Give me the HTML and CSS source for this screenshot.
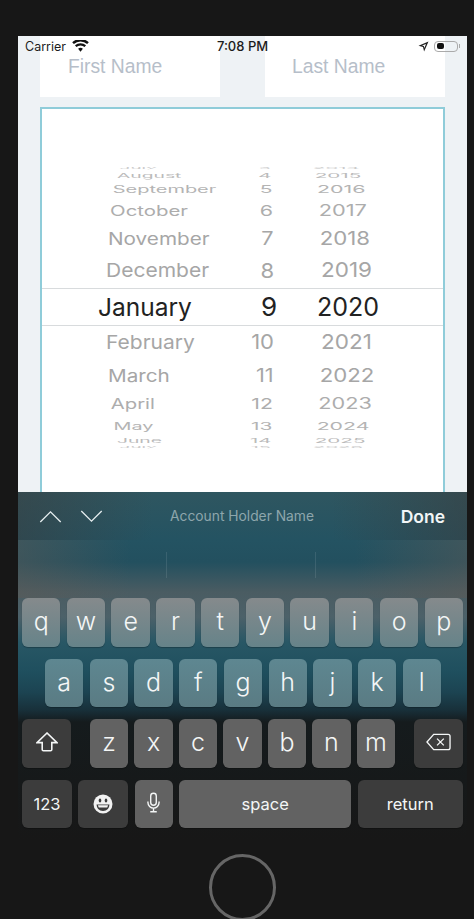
FILE: index.html
```html
<!DOCTYPE html>
<html lang="en">
<head>
  <meta charset="UTF-8">
  <title>Date picker</title>
  <link rel="stylesheet" href="styles.css">
</head>
<body>
<div class="screen">
  <div class="status">
    <div class="status-left">
      <span>Carrier</span>
      <svg class="wifi" viewBox="0 0 18 13"><path d="M9 12.6 6.4 9.6a3.8 3.8 0 0 1 5.2 0zM4.6 7.6 3 5.8a9 9 0 0 1 12 0l-1.6 1.8a6.6 6.6 0 0 0-8.8 0zM1.8 4.4 0 2.4a13.4 13.4 0 0 1 18 0l-1.8 2a10.8 10.8 0 0 0-14.4 0z"/></svg>
    </div>
    <div class="status-time">7:08 PM</div>
    <div class="status-right">
      <svg class="arrow" viewBox="0 0 11 11"><path d="M10.500.5 .5 4.700l4.500 1.300 1.100 4.500zM8 3 4 4.600l1.900.5.500 1.900z" fill-rule="evenodd"/></svg>
      <div class="battery"><div class="battery-level"></div></div>
      <div class="battery-tip"></div>
    </div>
  </div>

  <div class="names">
    <div class="field">First Name</div>
    <div class="field field-last">Last Name</div>
  </div>

  <div class="picker">
    <div class="wheel">
      <div class="row r-jul-top"><span>July</span><span>3</span><span>2014</span></div>
      <div class="row r-aug"><span>August</span><span>4</span><span>2015</span></div>
      <div class="row r-sep"><span>September</span><span>5</span><span>2016</span></div>
      <div class="row r-oct"><span>October</span><span>6</span><span>2017</span></div>
      <div class="row r-nov"><span>November</span><span>7</span><span>2018</span></div>
      <div class="row r-dec"><span>December</span><span>8</span><span>2019</span></div>
      <div class="row selected"><span>January</span><span>9</span><span>2020</span></div>
      <div class="row r-feb"><span>February</span><span>10</span><span>2021</span></div>
      <div class="row r-mar"><span>March</span><span>11</span><span>2022</span></div>
      <div class="row r-apr"><span>April</span><span>12</span><span>2023</span></div>
      <div class="row r-may"><span>May</span><span>13</span><span>2024</span></div>
      <div class="row r-jun"><span>June</span><span>14</span><span>2025</span></div>
      <div class="row r-jul"><span>July</span><span>15</span><span>2026</span></div>
    </div>
  </div>

  <div class="keyboard">
    <div class="toolbar">
      <div class="toolbar-nav">
        <svg class="chevron" viewBox="0 0 24 14"><path d="M1 13 12 2l11 11"/></svg>
        <svg class="chevron" viewBox="0 0 24 14"><path d="M1 1l11 11L23 1"/></svg>
      </div>
      <div class="toolbar-label">Account Holder Name</div>
      <div class="toolbar-done">Done</div>
    </div>
    <div class="suggestions">
      <div class="suggestion"></div>
      <div class="suggestion suggestion-mid"></div>
      <div class="suggestion"></div>
    </div>
    <div class="keys">
      <div class="key-row top-row">
        <div class="key">q</div><div class="key">w</div><div class="key">e</div><div class="key">r</div><div class="key">t</div><div class="key">y</div><div class="key">u</div><div class="key">i</div><div class="key">o</div><div class="key">p</div>
      </div>
      <div class="key-row home-row">
        <div class="key">a</div><div class="key">s</div><div class="key">d</div><div class="key">f</div><div class="key">g</div><div class="key">h</div><div class="key">j</div><div class="key">k</div><div class="key">l</div>
      </div>
      <div class="key-row bottom-row">
        <div class="key dark wide">
          <svg class="shift" viewBox="0 0 22 20"><path d="M11 1 1 10.600h5.200v6.900q0 1.300 1.300 1.300h7q1.300 0 1.300-1.300v-6.900H21z"/></svg>
        </div>
        <div class="letters">
          <div class="key">z</div><div class="key">x</div><div class="key">c</div><div class="key">v</div><div class="key">b</div><div class="key">n</div><div class="key">m</div>
        </div>
        <div class="key dark wide">
          <svg class="delete" viewBox="0 0 26 18"><path d="M8 1h15q2 0 2 2v12q0 2-2 2H8L1 9z"/><path d="m11.500 5.500 7 7m0-7-7 7"/></svg>
        </div>
      </div>
      <div class="key-row last-row">
        <div class="key dark small num">123</div>
        <div class="key dark small num">
          <svg class="emoji" viewBox="0 0 20 20"><circle class="face" cx="10" cy="10" r="9.500"/><ellipse class="eye" cx="7" cy="6.500" rx="1.300" ry="2"/><ellipse class="eye" cx="13" cy="6.500" rx="1.300" ry="2"/><path class="eye" d="M3.500 10.500h13q-.4 6.500-6.500 6.500t-6.500-6.500z"/><path class="face" d="M5 11.300h10q-.2 1.500-.8 2.200H5.800q-.6-.7-.8-2.200z"/></svg>
        </div>
        <div class="key mic-key">
          <svg class="mic" viewBox="0 0 14 22"><rect x="4" y="1" width="6" height="13" rx="3"/><path d="M1 10v1a6 6 0 0 0 12 0v-1M7 17v4M3.500 21h7"/></svg>
        </div>
        <div class="key small space">space</div>
        <div class="key dark small return">return</div>
      </div>
    </div>
  </div>
</div>
<div class="home-button"></div>
</body>
</html>
```

FILE: styles.css
```css
* {
  box-sizing: border-box;
}

body {
  margin: 0;
  width: 474px;
  height: 919px;
  padding: 36px 7px 0 18px;
  overflow: hidden;
  background-color: #171717;
  font-family: Inter, "Liberation Sans", sans-serif;
}

.screen {
  position: relative;
  background-color: #eef2f5;
}

/* status bar sits on top of the name fields */
.status {
  position: absolute;
  top: 0;
  left: 0;
  right: 0;
  height: 20px;
  padding: 0 7px;
  display: grid;
  grid-template-columns: 1fr auto 1fr;
  align-items: center;
  font-size: 12.500px;
  color: #1c1c1c;
}

.status-left {
  display: flex;
  align-items: center;
  gap: 6px;
}

.wifi {
  width: 17px;
  height: 12px;
  fill: #111;
}

.status-time {
  font-size: 13px;
  font-weight: 500;
}

.status-right {
  display: flex;
  justify-content: flex-end;
  align-items: center;
}

.arrow {
  width: 11px;
  height: 11px;
  margin-right: 5px;
  fill: #222;
}

.battery {
  width: 24px;
  height: 11px;
  padding: 1.500px;
  border: 1px solid #aaa;
  border-radius: 4px;
}

.battery-level {
  width: 7px;
  height: 100%;
  border-radius: 2px;
  background-color: #111;
}

.battery-tip {
  width: 1px;
  height: 4px;
  margin-left: 1px;
  background-color: #aaa;
}

.names {
  display: flex;
  gap: 45px;
  padding: 0 22px;
}

.field {
  width: 180px;
  height: 61px;
  padding: 20px 0 0 28px;
  background-color: #fff;
  font-family: "Liberation Sans", sans-serif;
  font-size: 19.300px;
  line-height: 22px;
  color: #b6bec9;
}

.field-last {
  padding-left: 27px;
}

.picker {
  height: 385px;
  margin: 10px 22px 0;
  padding-top: 57px;
  border: 2px solid #8fccd9;
  border-bottom: none;
  background-color: #fff;
}

.row {
  display: grid;
  grid-template-columns: 124px 44px auto;
  align-items: center;
  padding-left: 64px;
  font-size: 21px;
  color: #a6a6a6;
  white-space: nowrap;
  transform-origin: 200px 50%;
}

.row span {
  display: block;
  line-height: 1;
}

.row span:nth-child(2) {
  font-size: 22px;
  text-align: right;
}

.row span:nth-child(3) {
  padding-left: 47px;
  font-size: 22.500px;
}

.row.selected {
  grid-template-columns: 124px 55px auto;
  height: 38px;
  padding-left: 56px;
  border-top: 1px solid #d8dbdd;
  border-bottom: 1px solid #d8dbdd;
  font-size: 24.500px;
  color: #222;
}

.row.selected span:nth-child(2) {
  font-size: 26px;
}

.row.selected span:nth-child(3) {
  padding-left: 40px;
  font-size: 25px;
}

/* wheel rows flatten as they turn away from the middle */
.r-jul-top { height: 2px; transform: scale(.9, .12); color: #ccc; }
.r-aug { height: 11px; transform: scale(.92, .3); color: #bbb; }
.r-sep { height: 19px; transform: scale(.95, .48); color: #b4b4b4; }
.r-oct { height: 25px; transform: scale(.97, .68); color: #adadad; }
.r-nov { height: 30px; transform: scale(.985, .82); }
.r-dec { height: 35px; transform: scale(1, .92); }
.r-feb { height: 32px; transform: scale(1, .92); }
.r-mar { height: 34px; transform: scale(.985, .82); }
.r-apr { height: 24px; transform: scale(.965, .68); color: #adadad; }
.r-may { height: 18px; transform: scale(.945, .48); color: #b4b4b4; }
.r-jun { height: 10px; transform: scale(.92, .3); color: #bbb; }
.r-jul { height: 4px; transform: scale(.9, .12); color: #ccc; }

.keyboard {
  height: 348px;
  background:
    linear-gradient(90deg, rgba(95, 90, 85, .45), rgba(90, 90, 90, 0) 25%, rgba(90, 90, 90, 0) 75%, rgba(95, 90, 85, .45)) 0 48px / 100% 58px no-repeat,
    linear-gradient(180deg, #2f5660 0, #245362 48px, #23505f 70px, #4a5c62 100px, #4c6169 125px, #285765 150px, #1f4f5e 180px, #1c4452 200px, #18303a 218px, #151b1d 230px, #171717 100%);
}

.toolbar {
  height: 48px;
  padding: 0 22px 0 21px;
  display: grid;
  grid-template-columns: 1fr auto 1fr;
  align-items: center;
  background: linear-gradient(90deg, rgba(60, 60, 60, .5), rgba(60, 60, 60, 0) 30%, rgba(60, 60, 60, 0) 70%, rgba(60, 60, 60, .5));
}

.toolbar-nav {
  display: flex;
  gap: 18px;
}

.chevron {
  width: 23px;
  height: 13px;
  fill: none;
  stroke: #e6eef0;
  stroke-width: 1.400;
}

.toolbar-label {
  font-size: 13.800px;
  color: #8ea6ac;
}

.toolbar-done {
  justify-self: end;
  font-size: 17.500px;
  font-weight: 600;
  color: #f2f6f7;
}

.suggestions {
  height: 58px;
  padding-top: 12px;
  display: grid;
  grid-template-columns: 148px 150px 1fr;
}

.suggestion {
  height: 26px;
}

.suggestion-mid {
  border-left: 1px solid rgba(255, 255, 255, .1);
  border-right: 1px solid rgba(255, 255, 255, .1);
}

.keys {
  padding: 0 4px;
  display: flex;
  flex-direction: column;
  gap: 12px;
}

.key-row {
  height: 48.500px;
  display: flex;
  gap: 6.400px;
}

.key {
  flex: 1;
  display: flex;
  justify-content: center;
  align-items: center;
  padding-bottom: 2px;
  border-radius: 6px;
  background-color: #626262;
  font-size: 25px;
  font-weight: 300;
  color: #f4f6f6;
  box-shadow: 0 1px 1px rgba(0, 0, 0, .25);
}

.top-row .key {
  background: linear-gradient(180deg, #858a8c, #668389);
}

.home-row {
  padding: 0 22px 0 23px;
}

.home-row .key {
  background: linear-gradient(180deg, #5e8791, #5a7b83);
}

.bottom-row {
  gap: 19px;
}

.letters {
  flex: 1;
  display: flex;
  gap: 6.400px;
}

.dark {
  background-color: #3c3c3c;
}

.wide {
  flex: 0 0 49px;
}

.small {
  padding-bottom: 0;
  font-size: 16.500px;
  font-weight: 400;
}

.num {
  flex: 0 0 50px;
}

.mic-key {
  flex: 0 0 38px;
}

.space {
  flex: 0 0 172px;
}

.return {
  flex: 1;
}

.shift {
  width: 22px;
  height: 20px;
  fill: none;
  stroke: #f4f6f6;
  stroke-width: 1.600;
}

.delete {
  width: 25px;
  height: 18px;
  fill: none;
  stroke: #f4f6f6;
  stroke-width: 1.400;
}

.emoji {
  width: 20px;
  height: 20px;
}

.face {
  fill: #f2f2f2;
}

.eye {
  fill: #3c3c3c;
}

.mic {
  width: 13px;
  height: 21px;
  fill: none;
  stroke: #f4f6f6;
  stroke-width: 1.500;
}

.home-button {
  width: 67px;
  height: 67px;
  margin: 14px 0 0 191px;
  border: 3px solid #666;
  border-radius: 50%;
}
```
